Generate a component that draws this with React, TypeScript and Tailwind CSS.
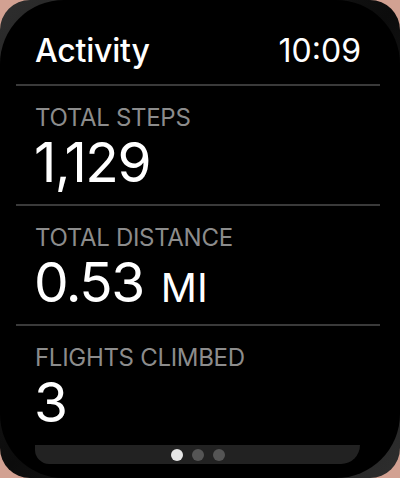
import React from 'react';

const STATS = [
  { label: 'TOTAL STEPS', value: '1,129' },
  { label: 'TOTAL DISTANCE', value: '0.53', unit: 'MI' },
  { label: 'FLIGHTS CLIMBED', value: '3' },
];

function StatRow({ label, value, unit }: { label: string; value: string; unit?: string }) {
  return (
    <div className="flex flex-col h-[120px]">
      <div className="ml-[16px] mr-[20px] h-[2px] bg-[#3a3a3a]" />
      <div className="pl-[35px] pt-[20px] text-[24px] leading-[24px] text-[#8c8c8c] tracking-[-0.3px]">
        {label}
      </div>
      <div className="pl-[34px] pt-[4px] h-[74px] text-[55px] leading-[56px] text-white tracking-[-1.5px]">
        {value}
        {unit && <span className="ml-[17px] text-[40px] tracking-[0px]">{unit}</span>}
      </div>
    </div>
  );
}

export default function App() {
  return (
    <div className="w-[400px] h-[478px] bg-[#d2a192] overflow-hidden" style={{ fontFamily: 'Inter, "Noto Sans", sans-serif' }}>
      <div className="w-full h-full rounded-[30px] bg-gradient-to-br from-[#2e2e2e] via-[#0c0c0c] to-[#2e2e2e] overflow-hidden">
        <div className="w-full h-full rounded-[64px] bg-black flex flex-col overflow-hidden">
          {/* Header */}
          <div className="flex justify-between items-end pl-[35px] pr-[39px] pb-[16px] h-[84px]">
            <span className="text-[32px] leading-[34px] font-medium text-white tracking-[-0.2px]">Activity</span>
            <span className="text-[32px] leading-[34px] text-white">10:09</span>
          </div>

          {STATS.map((s) => (
            <StatRow key={s.label} {...s} />
          ))}

          {/* Page indicator */}
          <div className="mt-[1px] ml-[35px] mr-[40px] h-[19px] bg-[#222] rounded-bl-[30px] rounded-br-[40px] flex items-center justify-center gap-[9px]">
            <div className="w-[12px] h-[12px] rounded-full bg-[#e6e6e6]" />
            <div className="w-[12px] h-[12px] rounded-full bg-[#555]" />
            <div className="w-[12px] h-[12px] rounded-full bg-[#555]" />
          </div>
        </div>
      </div>
    </div>
  );
}
